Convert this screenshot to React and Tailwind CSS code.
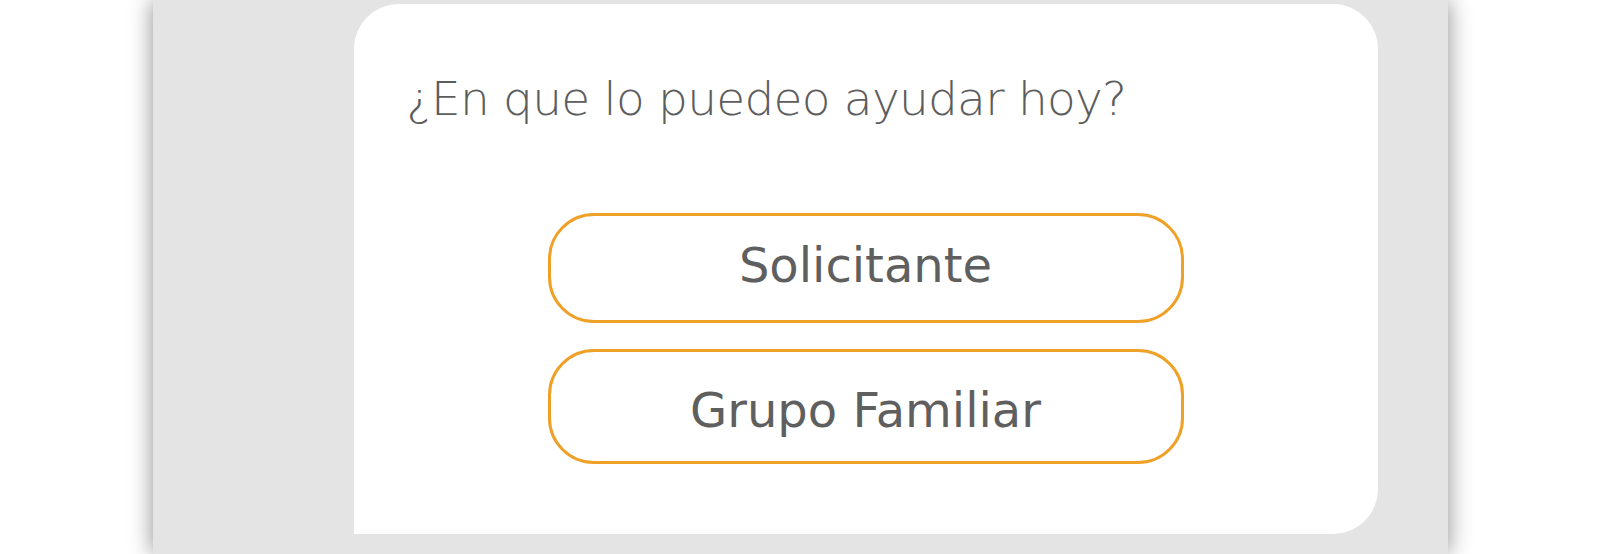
export default function App() {
  return (
    <div className="w-full h-[554px] bg-white overflow-hidden flex justify-center">
      <div className="w-[1295px] h-full bg-[#e4e4e4] shadow-[0_0_22px_rgba(0,0,0,0.45)] flex justify-end pr-[70px] pt-[4px]">
        <div className="w-[1024px] h-[530px] bg-white rounded-[45px] rounded-bl-none pt-[71px] px-[53px] flex flex-col">
          <h1
            className="text-[47px] leading-none tracking-[-0.75px] text-[#5d5d5d]"
            style={{ fontFamily: '"DejaVu Sans", sans-serif', fontWeight: 200 }}
          >
            ¿En que lo puedeo ayudar hoy?
          </h1>
          <div className="mt-[91px] flex flex-col items-center gap-[26px]">
            <button
              className="w-[636px] h-[110px] border-[3px] border-[#efa027] rounded-[46px] flex items-center justify-center pb-[6px] text-[48px] leading-none text-[#5f5f5f]"
              style={{ fontFamily: '"DejaVu Sans", sans-serif' }}
            >
              Solicitante
            </button>
            <button
              className="w-[636px] h-[115px] border-[3px] border-[#efa027] rounded-[46px] flex items-center justify-center pt-[7px] text-[48px] leading-none text-[#5f5f5f]"
              style={{ fontFamily: '"DejaVu Sans", sans-serif' }}
            >
              Grupo Familiar
            </button>
          </div>
        </div>
      </div>
    </div>
  );
}
